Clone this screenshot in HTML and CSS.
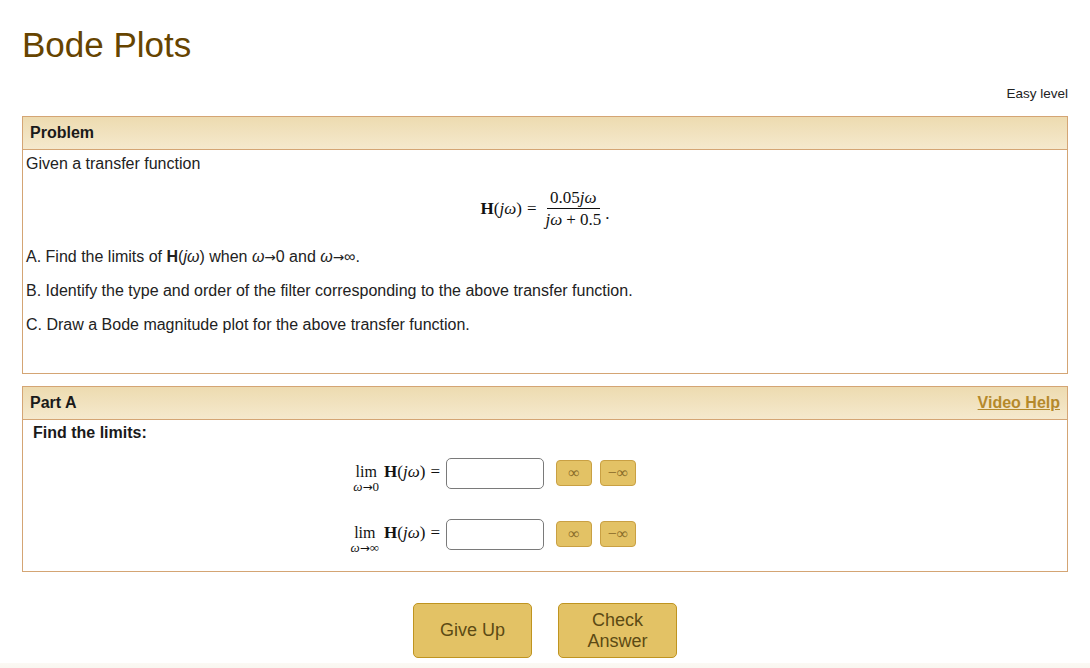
FILE: index.html
```html
<!DOCTYPE html>
<html>
<head>
<meta charset="utf-8">
<link rel="stylesheet" href="styles.css">
</head>
<body>
<div class="page">
  <h1 class="title">Bode Plots</h1>
  <div class="level">Easy level</div>

  <section class="panel problem">
    <div class="panel-head"><span class="head-title">Problem</span></div>
    <div class="panel-body">
      <p class="intro">Given a transfer function</p>
      <div class="eq">
        <span class="mh">H</span><span class="mr">(</span><span class="mi">j</span><span class="mi">ω</span><span class="mr">)</span><span class="mr eqsign">=</span>
        <span class="frac">
          <span class="num"><span class="mr">0.05</span><span class="mi">j</span><span class="mi">ω</span></span>
          <span class="den"><span class="mi">j</span><span class="mi">ω</span><span class="mr plus">+</span><span class="mr">0.5</span></span>
        </span>
        <span class="mr period">.</span>
      </div>
      <p class="item">A. Find the limits of <b>H</b>(<i>jω</i>) when <i>ω</i><span class="arrow">→</span>0 and <i>ω</i><span class="arrow">→</span>∞.</p>
      <p class="item">B. Identify the type and order of the filter corresponding to the above transfer function.</p>
      <p class="item last">C. Draw a Bode magnitude plot for the above transfer function.</p>
    </div>
  </section>

  <section class="panel parta">
    <div class="panel-head">
      <span class="head-title">Part A</span>
      <a class="video" href="#">Video Help</a>
    </div>
    <div class="panel-body">
      <div class="prompt">Find the limits:</div>
      <div class="limits">
        <div class="lim-row">
          <div class="expr">
            <span class="limcol"><span class="lim">lim</span><span class="sub"><i>ω</i><span class="arrow">→</span>0</span></span>
            <span class="fn"><span class="mh">H</span><span class="mr">(</span><span class="mi">j</span><span class="mi">ω</span><span class="mr">)</span><span class="mr eqsign">=</span></span>
          </div>
          <div class="answer"></div>
          <button class="sym">∞</button>
          <button class="sym">−∞</button>
        </div>
        <div class="lim-row">
          <div class="expr">
            <span class="limcol"><span class="lim">lim</span><span class="sub"><i>ω</i><span class="arrow">→</span>∞</span></span>
            <span class="fn"><span class="mh">H</span><span class="mr">(</span><span class="mi">j</span><span class="mi">ω</span><span class="mr">)</span><span class="mr eqsign">=</span></span>
          </div>
          <div class="answer"></div>
          <button class="sym">∞</button>
          <button class="sym">−∞</button>
        </div>
      </div>
    </div>
  </section>

  <div class="actions">
    <button class="action">Give Up</button>
    <button class="action">Check<br>Answer</button>
  </div>
</div>
<div class="footer"></div>
</body>
</html>
```

FILE: styles.css
```css
html, body {
  margin: 0;
  padding: 0;
  background: #ffffff;
}
body {
  font-family: "Liberation Sans", Arial, sans-serif;
  color: #222222;
  overflow: hidden;
}
.page {
  padding: 0 22px;
}
.title {
  margin: 0;
  padding-top: 25px;
  font-size: 35px;
  line-height: 40px;
  font-weight: normal;
  color: #664400;
}
.level {
  margin-top: 21px;
  text-align: right;
  font-size: 13.5px;
  line-height: 16px;
  color: #222222;
}
.panel {
  border: 1px solid #d4a574;
  background: #ffffff;
}
.problem {
  margin-top: 14px;
}
.parta {
  margin-top: 12px;
}
.panel-head {
  height: 32px;
  line-height: 32px;
  padding: 0 7px;
  display: flex;
  justify-content: space-between;
  align-items: center;
  background: linear-gradient(to bottom, #eddbb0, #f5e9cd);
  border-bottom: 1px solid #d4a574;
}
.head-title {
  font-weight: bold;
  font-size: 16px;
  color: #1a1a1a;
}
.video {
  font-weight: bold;
  font-size: 16px;
  color: #b5892a;
  text-decoration: underline;
}
.problem .panel-body {
  padding: 4px 3px 38px 3px;
}
.intro, .item {
  margin: 0;
  font-size: 16px;
  line-height: 20px;
}
.item {
  margin-bottom: 14px;
}
.item.last {
  margin-bottom: 0;
}
.arrow {
  font-family: "DejaVu Sans", sans-serif;
  font-size: 0.85em;
}
.eq {
  display: flex;
  justify-content: center;
  align-items: center;
  padding: 14px 0 17px 0;
  font-family: "Liberation Serif", "Times New Roman", serif;
  font-size: 17px;
  color: #111111;
}
.mh {
  font-weight: bold;
  font-family: "Liberation Serif", "Times New Roman", serif;
}
.mi {
  font-style: italic;
  font-family: "Liberation Serif", "Times New Roman", serif;
}
.mr {
  font-family: "Liberation Serif", "Times New Roman", serif;
}
.eqsign {
  margin: 0 6px 0 5px;
}
.frac {
  display: inline-flex;
  flex-direction: column;
  align-items: center;
}
.num {
  line-height: 20px;
  padding: 0 3px;
  border-bottom: 1px solid #111111;
}
.den {
  line-height: 21px;
  padding: 0 3px;
}
.plus {
  margin: 0 4px;
}
.period {
  align-self: flex-end;
  line-height: 20px;
  padding-bottom: 6px;
  margin-left: 1px;
}
.parta .panel-body {
  padding: 3px 10px 21px 10px;
}
.prompt {
  font-weight: bold;
  font-size: 16px;
  line-height: 20px;
  color: #1a1a1a;
}
.limits {
  margin-top: 15px;
  display: flex;
  flex-direction: column;
  gap: 30px;
}
.lim-row {
  height: 31px;
  display: flex;
  align-items: flex-start;
}
.expr {
  width: 140px;
  margin-left: 267px;
  margin-top: 3px;
  display: flex;
  justify-content: flex-end;
  align-items: flex-start;
  font-family: "Liberation Serif", "Times New Roman", serif;
  font-size: 17px;
  color: #111111;
}
.limcol {
  display: flex;
  flex-direction: column;
  align-items: center;
  margin-right: 5px;
}
.lim {
  font-size: 16px;
  line-height: 22px;
}
.sub {
  font-size: 13px;
  line-height: 10px;
  margin-top: -1px;
  white-space: nowrap;
}
.sub .arrow {
  font-size: 12px;
}
.fn {
  line-height: 22px;
}
.fn .eqsign {
  margin: 0 0 0 5px;
}
.answer {
  box-sizing: border-box;
  width: 98px;
  height: 31px;
  margin-left: 6px;
  border: 1px solid #7a7a7a;
  border-radius: 5px;
  background: #ffffff;
}
.sym {
  box-sizing: border-box;
  margin: 2px 0 0 8px;
  width: 36px;
  height: 26px;
  padding: 0 0 1px 0;
  border: 1px solid #c9a043;
  border-radius: 4px;
  background: #e3c265;
  color: #8a6d2a;
  font-family: "Liberation Serif", "Times New Roman", serif;
  font-size: 16px;
  line-height: 20px;
}
.answer + .sym {
  margin-left: 12px;
}
.actions {
  margin-top: 31px;
  display: flex;
  justify-content: center;
  gap: 26px;
}
.action {
  box-sizing: border-box;
  width: 119px;
  height: 55px;
  padding: 0;
  border: 1px solid #bf9420;
  border-radius: 5px;
  background: #e3c265;
  color: #5c4a14;
  font-family: "Liberation Sans", Arial, sans-serif;
  font-size: 18px;
  line-height: 21px;
}
.footer {
  margin-top: 5px;
  height: 20px;
  background: linear-gradient(to bottom, #fbf9f4, #f3eee3);
}
```
